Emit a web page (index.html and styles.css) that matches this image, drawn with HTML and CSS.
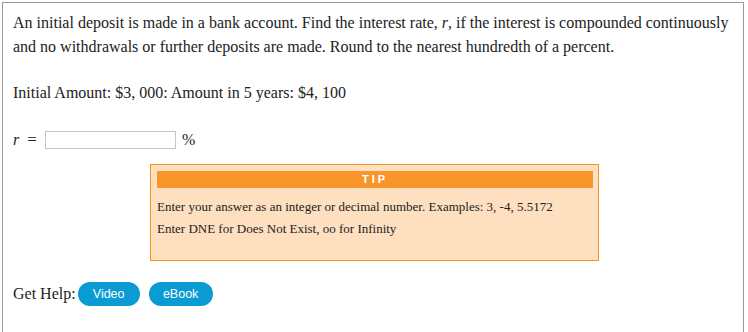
FILE: index.html
```html
<!DOCTYPE html>
<html>
<head>
<meta charset="utf-8">
<link rel="stylesheet" href="styles.css">
</head>
<body>
<div class="frame">
  <p class="q">An initial deposit is made in a bank account. Find the interest rate, <i class="var">r</i>, if the interest is compounded continuously and no withdrawals or further deposits are made. Round to the nearest hundredth of a percent.</p>
  <p class="given">Initial Amount: $3, 000: Amount in 5 years: $4, 100</p>
  <div class="answer">
    <span class="lhs"><i class="var">r</i><span class="eq">=</span></span>
    <input class="field" type="text">
    <span class="pct">%</span>
  </div>
  <div class="tip">
    <div class="tip-head">TIP</div>
    <div class="tip-body">
      <div class="tip-line">Enter your answer as an integer or decimal number. Examples: 3, -4, 5.5172</div>
      <div class="tip-line">Enter DNE for Does Not Exist, oo for Infinity</div>
    </div>
  </div>
  <div class="help">
    <span class="help-label">Get Help:</span>
    <button class="btn">Video</button>
    <button class="btn">eBook</button>
  </div>
</div>
</body>
</html>
```
FILE: styles.css
```css
html, body {
  margin: 0;
  padding: 0;
  background: #fff;
}
body {
  padding: 2px 0 0 2px;
  height: 330px;
  overflow: hidden;
}
.frame {
  width: 742px;
  height: 360px;
  border: 1px solid #9a9a9a;
  padding: 8px 10px 0 10px;
  box-sizing: border-box;
  font-family: "Liberation Serif", "Times New Roman", serif;
  font-size: 16px;
  color: #222;
}
.q {
  margin: 0;
  line-height: 23.5px;
}
.var {
  font-style: italic;
  font-family: "Liberation Serif", "Times New Roman", serif;
}
.given {
  margin: 23px 0 0 0;
  line-height: 23px;
}
.answer {
  display: flex;
  align-items: center;
  margin-top: 26px;
  height: 20px;
  font-family: "Liberation Serif", "Times New Roman", serif;
}
.lhs {
  width: 32px;
  display: flex;
  align-items: center;
}
.eq {
  margin-left: 8px;
  font-size: 17px;
}
.field {
  width: 131px;
  height: 18px;
  box-sizing: border-box;
  border: 1px solid #c6c6c6;
  margin: 0;
  padding: 0;
}
.pct {
  margin-left: 6px;
}
.tip {
  margin: 14px 0 0 137px;
  width: 449px;
  height: 97px;
  box-sizing: border-box;
  border: 1px solid #f7931e;
  background: #fee0c1;
  padding: 6px 5px 0 6px;
}
.tip-head {
  background: #f9962a;
  color: #fff;
  font-family: "Liberation Sans", Arial, sans-serif;
  font-weight: bold;
  font-size: 11px;
  letter-spacing: 3px;
  text-align: center;
  height: 17px;
  line-height: 17px;
}
.tip-body {
  padding-top: 8px;
  font-size: 13px;
  color: #222;
}
.tip-line {
  line-height: 22px;
}
.help {
  display: flex;
  align-items: center;
  margin-top: 21px;
}
.help-label {
  margin-right: 2px;
}
.btn {
  background: #0a9ad4;
  color: #fff;
  border: none;
  border-radius: 12px;
  height: 24px;
  padding: 0;
  font-family: "Liberation Sans", Arial, sans-serif;
  font-size: 12.5px;
  margin-right: 9px;
}
.btn:first-of-type {
  width: 62px;
}
.btn:last-of-type {
  width: 64px;
}
```
